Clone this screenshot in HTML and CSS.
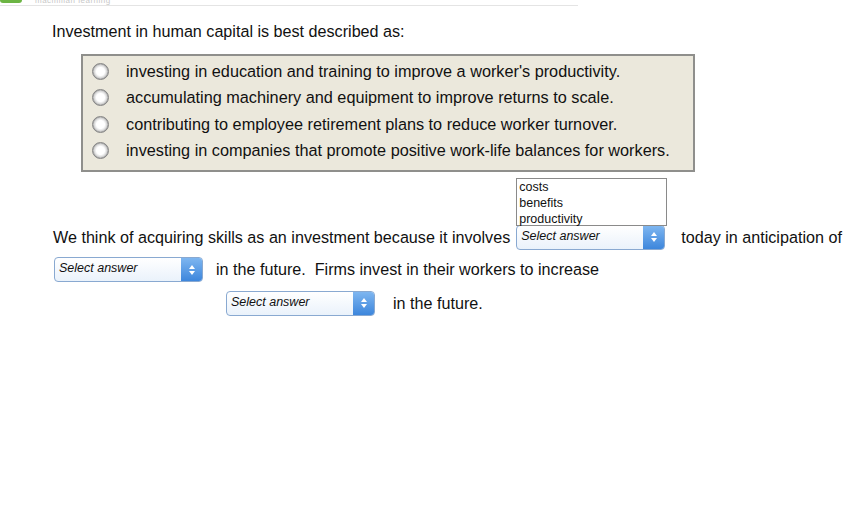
FILE: index.html
```html
<!DOCTYPE html>
<html>
<head>
<meta charset="utf-8">
<link rel="stylesheet" href="styles.css">
</head>
<body>
<div class="topbar">
  <div class="logo"></div>
  <div class="brand">macmillan learning</div>
</div>
<p class="question">Investment in human capital is best described as:</p>
<div class="choices">
  <div class="choice"><span class="radio"></span><span>investing in education and training to improve a worker's productivity.</span></div>
  <div class="choice"><span class="radio"></span><span>accumulating machinery and equipment to improve returns to scale.</span></div>
  <div class="choice"><span class="radio"></span><span>contributing to employee retirement plans to reduce worker turnover.</span></div>
  <div class="choice"><span class="radio"></span><span>investing in companies that promote positive work-life balances for workers.</span></div>
</div>
<div class="fill">
  <div class="line line1">
    <span>We think of acquiring skills as an investment because it involves</span>
    <span class="selwrap">
      <span class="listbox">
        <span>costs</span>
        <span>benefits</span>
        <span>productivity</span>
      </span>
      <span class="select"><span class="label">Select answer</span><span class="arrow"><svg width="8" height="12" viewBox="0 0 8 12"><path d="M4 1 L7 5 H1 Z M4 11 L7 7 H1 Z" fill="#fff"/></svg></span></span>
    </span>
    <span class="after">today in anticipation of</span>
  </div>
  <div class="line line2">
    <span class="select"><span class="label">Select answer</span><span class="arrow"><svg width="8" height="12" viewBox="0 0 8 12"><path d="M4 1 L7 5 H1 Z M4 11 L7 7 H1 Z" fill="#fff"/></svg></span></span>
    <span>in the future.&nbsp; Firms invest in their workers to increase</span>
  </div>
  <div class="line line3">
    <span class="select"><span class="label">Select answer</span><span class="arrow"><svg width="8" height="12" viewBox="0 0 8 12"><path d="M4 1 L7 5 H1 Z M4 11 L7 7 H1 Z" fill="#fff"/></svg></span></span>
    <span>in the future.</span>
  </div>
</div>
</body>
</html>
```

FILE: styles.css
```css
html, body {
  margin: 0;
  padding: 0;
  background: #fff;
  font-family: "Liberation Sans", Arial, sans-serif;
  color: #111;
}
.topbar {
  position: relative;
  width: 578px;
  height: 5px;
  border-bottom: 1px solid #e4e4e4;
  overflow: hidden;
  display: flex;
}
.logo {
  width: 22px;
  height: 3px;
  background: #6cb544;
  border-radius: 0 0 8px 8px;
}
.brand {
  margin-left: 13px;
  font-size: 8px;
  line-height: 8px;
  color: #c8c8c8;
  margin-top: -3px;
  letter-spacing: 0.5px;
}
.question {
  margin: 15px 0 0 52px;
  font-size: 16.15px;
  line-height: 20px;
}
.choices {
  margin: 13px 0 0 81px;
  width: 610px;
  padding: 2px 0 6px 0;
  background: #ebe8dc;
  border: 2px solid #8f8f8c;
  box-sizing: content-box;
}
.choice {
  display: flex;
  align-items: center;
  height: 26.5px;
  font-size: 16.25px;
}
.radio {
  width: 15px;
  height: 15px;
  margin: 0 17px 0 9px;
  border-radius: 50%;
  border: 1.5px solid #858585;
  background: radial-gradient(circle at 50% 50%, #ffffff 0%, #ffffff 38%, #d8d8d8 60%, #9a9a9a 100%);
  box-shadow: inset 0 0 1px #666;
  flex: none;
}
.fill {
  margin-top: 52px;
  font-size: 16.15px;
}
.line {
  display: flex;
  align-items: center;
}
.line1 {
  margin-left: 53px;
  height: 26px;
}
.line1 .selwrap {
  margin-left: 6px;
}
.line1 .after {
  margin-left: 16px;
}
.line2 {
  margin-top: 7px;
  margin-left: 54px;
  height: 25px;
}
.line2 .select {
  margin-right: 13px;
}
.line3 {
  margin-top: 8px;
  margin-left: 226px;
  height: 26px;
}
.line3 .select {
  margin-right: 18px;
}
.selwrap {
  position: relative;
  display: inline-block;
}
.listbox {
  position: absolute;
  left: 0;
  bottom: 24px;
  width: 147px;
  height: 46px;
  border: 1px solid #8a8a8a;
  background: #fff;
  display: flex;
  flex-direction: column;
  padding: 0 0 0 2px;
  font-size: 12.5px;
  line-height: 16px;
  color: #111;
  box-sizing: content-box;
}
.select {
  display: inline-flex;
  width: 149px;
  height: 25px;
  box-sizing: border-box;
  border: 1px solid #89a9d1;
  border-radius: 4px;
  background: linear-gradient(#ffffff, #eaf2fb);
  overflow: hidden;
  flex: none;
}
.select .label {
  flex: 1;
  font-size: 12.5px;
  font-style: italic;
  line-height: 21px;
  padding-left: 4px;
  color: #111;
}
.select .arrow {
  width: 21px;
  background: linear-gradient(#7eb6f0, #3d86dc);
  display: flex;
  align-items: center;
  justify-content: center;
}
```
